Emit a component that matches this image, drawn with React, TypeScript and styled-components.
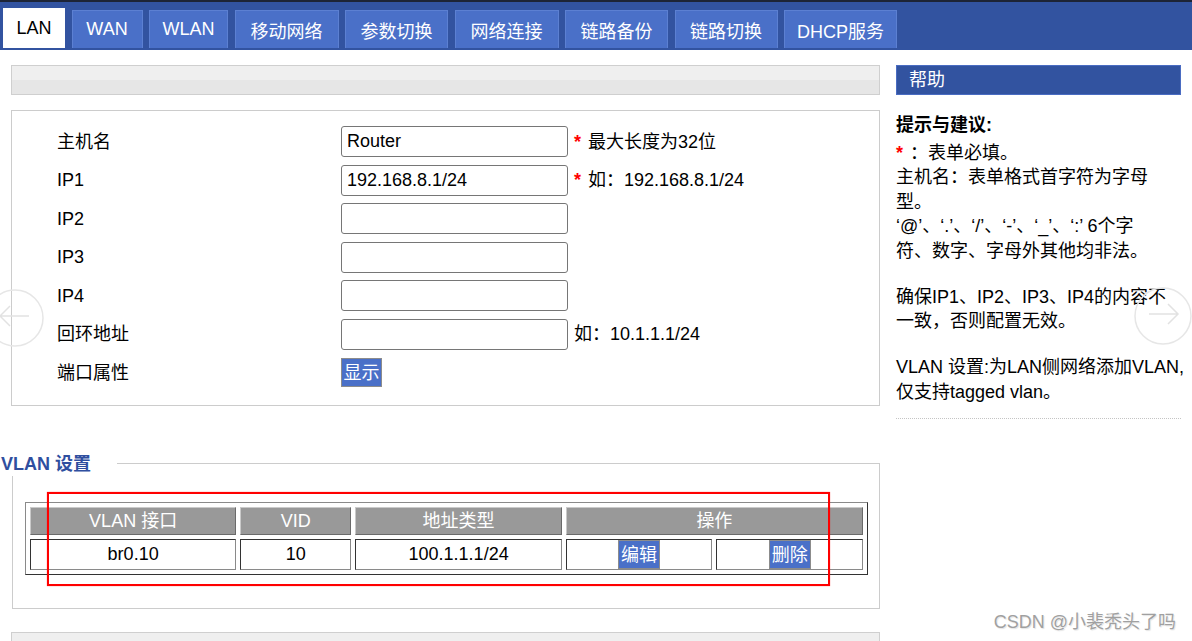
import React from 'react';
import styled, { createGlobalStyle } from 'styled-components';

const font_stack = '"Liberation Sans", "Noto Sans CJK SC", sans-serif';

const GlobalStyle = createGlobalStyle`
  html, body {
    margin: 0;
    padding: 0;
    background: #fff;
  }
  body {
    font-family: ${font_stack};
    font-size: 18px;
    color: #000;
  }
  * {
    box-sizing: border-box;
  }
`;

const Page = styled.div`
  position: relative;
  width: 1192px;
  height: 641px;
  overflow: hidden;
  background: #fff;
`;

const NavBar = styled.nav`
  display: flex;
  align-items: flex-end;
  gap: 6.5px;
  height: 50px;
  padding: 0 0 2px 3px;
  background: #3253a0;
  border-top: 2px solid #1d2436;
`;

const Tab = styled.a<{ $active?: boolean; $w: number }>`
  display: flex;
  align-items: center;
  justify-content: center;
  width: ${(p) => p.$w}px;
  height: ${(p) => (p.$active ? 40 : 38)}px;
  font-size: 18px;
  white-space: nowrap;
  color: ${(p) => (p.$active ? '#000' : '#fff')};
  background: ${(p) => (p.$active ? '#fff' : '#4a70c8')};
  border: 1px solid ${(p) => (p.$active ? '#fff' : '#5c80d2')};
  border-bottom: none;
  cursor: pointer;
`;

const Main = styled.div`
  display: flex;
  gap: 16px;
  padding: 15px 11px 0 11px;
`;

const LeftCol = styled.div`
  display: flex;
  flex-direction: column;
  width: 869px;
`;

const GrayBar = styled.div<{ $mt?: number }>`
  height: 30px;
  margin-top: ${(p) => p.$mt ?? 0}px;
  border: 1px solid #cfcfcf;
  background: linear-gradient(#efefef 0 50%, #e6e6e6 50% 100%);
`;

const FormBox = styled.div`
  margin-top: 15px;
  border: 1px solid #cccccc;
  padding: 15px 0 17px 45px;
`;

const Row = styled.div`
  display: grid;
  grid-template-columns: 284px 227px 1fr;
  align-items: center;
  height: 31px;

  & + & {
    margin-top: 7.5px;
  }
`;

const Label = styled.span`
  font-size: 18px;
  line-height: 24px;
`;

const TextInput = styled.input`
  width: 227px;
  height: 31px;
  border: 1px solid #767676;
  border-radius: 3px;
  padding: 0 5px;
  font-family: ${font_stack};
  font-size: 18px;
  color: #000;
  background: #fff;
  outline: none;
`;

const BlueButton = styled.button`
  height: 29px;
  padding: 0 1px;
  border: 1px solid #8c8c8c;
  background: #4a70c8;
  color: #fff;
  font-family: ${font_stack};
  font-size: 18px;
  line-height: 26px;
  cursor: pointer;
`;

const ShowButton = styled(BlueButton)`
  justify-self: start;
  width: 41px;
`;

const Hint = styled.span`
  padding-left: 6px;
  font-size: 18px;
  line-height: 24px;
  white-space: nowrap;
`;

const Star = styled.span`
  color: #ff0000;
  font-weight: bold;
  margin-right: 7px;
`;

const VlanBox = styled.section`
  position: relative;
  margin: 57px 0 0 1px;
  border: 1px solid #cccccc;
  padding: 38px 11px 33px 12px;
`;

const VlanTitle = styled.h3`
  position: absolute;
  top: -12px;
  left: -13px;
  margin: 0;
  padding: 0 26px 0 1px;
  background: #fff;
  color: #2f4f9f;
  font-size: 18px;
  font-weight: bold;
  line-height: 24px;
`;

const VlanTable = styled.table`
  width: 100%;
  table-layout: fixed;
  border-collapse: separate;
  border-spacing: 4px;
  border: 1px solid;
  border-color: #8a8a8a #333 #333 #8a8a8a;
`;

const HeadCell = styled.th`
  padding: 0;
  background: #999999;
  color: #fff;
  font-weight: normal;
  font-size: 18px;
  line-height: 26px;
  text-align: center;
  border: 1px solid;
  border-color: #cacaca #6a6a6a #6a6a6a #cacaca;
`;

const DataCell = styled.td`
  padding: 0;
  font-size: 18px;
  line-height: 29px;
  text-align: center;
  vertical-align: top;
  border: 1px solid;
  border-color: #333 #8a8a8a #8a8a8a #333;
`;

const CellButton = styled(BlueButton)`
  display: inline-block;
  vertical-align: top;
  width: 42px;
`;

const MarkBox = styled.div`
  position: absolute;
  left: 34px;
  top: 28px;
  width: 783px;
  height: 94px;
  border: 2px solid #ff0000;
  box-shadow: 0 0 1px rgba(255, 0, 0, 0.6);
  pointer-events: none;
`;

const HelpCol = styled.aside`
  width: 285px;
`;

const HelpHeader = styled.div`
  height: 30px;
  padding-left: 12px;
  border: 1px solid #4a6cc2;
  background: #3253a0;
  color: #fff;
  font-size: 18px;
  line-height: 28px;
`;

const HelpBody = styled.div`
  margin-top: 17.75px;
  font-size: 18px;
  line-height: 24.5px;
  white-space: nowrap;
`;

const HelpTitle = styled.div`
  font-weight: bold;
  margin-bottom: 3.5px;
`;

const HelpPara = styled.p`
  margin: 0;

  & + & {
    margin-top: 21.5px;
  }
`;

const DottedRule = styled.div`
  margin-top: 13.75px;
  border-top: 1px dotted #c4c4c4;
`;

const SlideArrow = styled.svg<{ $x: number; $y: number }>`
  position: absolute;
  left: ${(p) => p.$x - 30}px;
  top: ${(p) => p.$y - 30}px;
  width: 60px;
  height: 60px;
  pointer-events: none;
`;

const Watermark = styled.div`
  position: absolute;
  right: 16px;
  bottom: 8px;
  font-size: 18px;
  line-height: 22px;
  color: #a0a0a0;
  text-shadow: 0 0 1px #fff, 1px 1px 1px rgba(0, 0, 0, 0.12);
  pointer-events: none;
`;

const tabs = [
  { name: 'LAN', w: 62, active: true },
  { name: 'WAN', w: 71 },
  { name: 'WLAN', w: 79 },
  { name: '移动网络', w: 104 },
  { name: '参数切换', w: 103 },
  { name: '网络连接', w: 104 },
  { name: '链路备份', w: 103 },
  { name: '链路切换', w: 103 },
  { name: 'DHCP服务', w: 113 },
];

const fields = [
  { label: '主机名', value: 'Router', star: true, hint: '最大长度为32位' },
  { label: 'IP1', value: '192.168.8.1/24', star: true, hint: '如：192.168.8.1/24' },
  { label: 'IP2', value: '' },
  { label: 'IP3', value: '' },
  { label: 'IP4', value: '' },
  { label: '回环地址', value: '', hint: '如：10.1.1.1/24' },
];

const Arrow = ({ x, y, dir }: { x: number; y: number; dir: 'left' | 'right' }) => (
  <SlideArrow $x={x} $y={y} viewBox="0 0 60 60">
    <circle cx="30" cy="30" r="28" fill="none" stroke="#e6e6e6" strokeWidth="1.5" />
    {dir === 'left' ? (
      <path d="M44 28 H15 M25 18 L15 28 L25 38" fill="none" stroke="#e2e2e2" strokeWidth="1.5" />
    ) : (
      <path d="M16 28 H45 M35 18 L45 28 L35 38" fill="none" stroke="#e2e2e2" strokeWidth="1.5" />
    )}
  </SlideArrow>
);

const App = () => (
  <Page>
    <GlobalStyle />
    <NavBar>
      {tabs.map((t) => (
        <Tab key={t.name} $w={t.w} $active={t.active}>
          {t.name}
        </Tab>
      ))}
    </NavBar>

    <Main>
      <LeftCol>
        <GrayBar />

        <FormBox>
          {fields.map((f) => (
            <Row key={f.label}>
              <Label>{f.label}</Label>
              <TextInput defaultValue={f.value} />
              {f.hint ? (
                <Hint>
                  {f.star && <Star>*</Star>}
                  {f.hint}
                </Hint>
              ) : (
                <span />
              )}
            </Row>
          ))}
          <Row>
            <Label>端口属性</Label>
            <ShowButton>显示</ShowButton>
          </Row>
        </FormBox>

        <VlanBox>
          <VlanTitle>VLAN 设置</VlanTitle>
          <VlanTable>
            <colgroup>
              <col style={{ width: 204 }} />
              <col style={{ width: 110 }} />
              <col style={{ width: 204 }} />
              <col style={{ width: 145 }} />
              <col style={{ width: 145 }} />
            </colgroup>
            <thead>
              <tr>
                <HeadCell>VLAN 接口</HeadCell>
                <HeadCell>VID</HeadCell>
                <HeadCell>地址类型</HeadCell>
                <HeadCell colSpan={2}>操作</HeadCell>
              </tr>
            </thead>
            <tbody>
              <tr>
                <DataCell>br0.10</DataCell>
                <DataCell>10</DataCell>
                <DataCell>100.1.1.1/24</DataCell>
                <DataCell>
                  <CellButton>编辑</CellButton>
                </DataCell>
                <DataCell>
                  <CellButton>删除</CellButton>
                </DataCell>
              </tr>
            </tbody>
          </VlanTable>
          <MarkBox />
        </VlanBox>

        <GrayBar $mt={23} />
      </LeftCol>

      <HelpCol>
        <HelpHeader>帮助</HelpHeader>
        <HelpBody>
          <HelpTitle>提示与建议:</HelpTitle>
          <HelpPara>
            <Star>*</Star>：表单必填。
            <br />
            主机名：表单格式首字符为字母
            <br />
            型。
            <br />
            ‘@’、‘.’、‘/’、‘-’、‘_’、‘:’ 6个字
            <br />
            符、数字、字母外其他均非法。
          </HelpPara>
          <HelpPara>
            确保IP1、IP2、IP3、IP4的内容不
            <br />
            一致，否则配置无效。
          </HelpPara>
          <HelpPara>
            VLAN 设置:为LAN侧网络添加VLAN,
            <br />
            仅支持tagged vlan。
          </HelpPara>
          <DottedRule />
        </HelpBody>
      </HelpCol>
    </Main>

    <Arrow x={15} y={318} dir="left" />
    <Arrow x={1163} y={316} dir="right" />
    <Watermark>CSDN @小裴秃头了吗</Watermark>
  </Page>
);

export default App;
